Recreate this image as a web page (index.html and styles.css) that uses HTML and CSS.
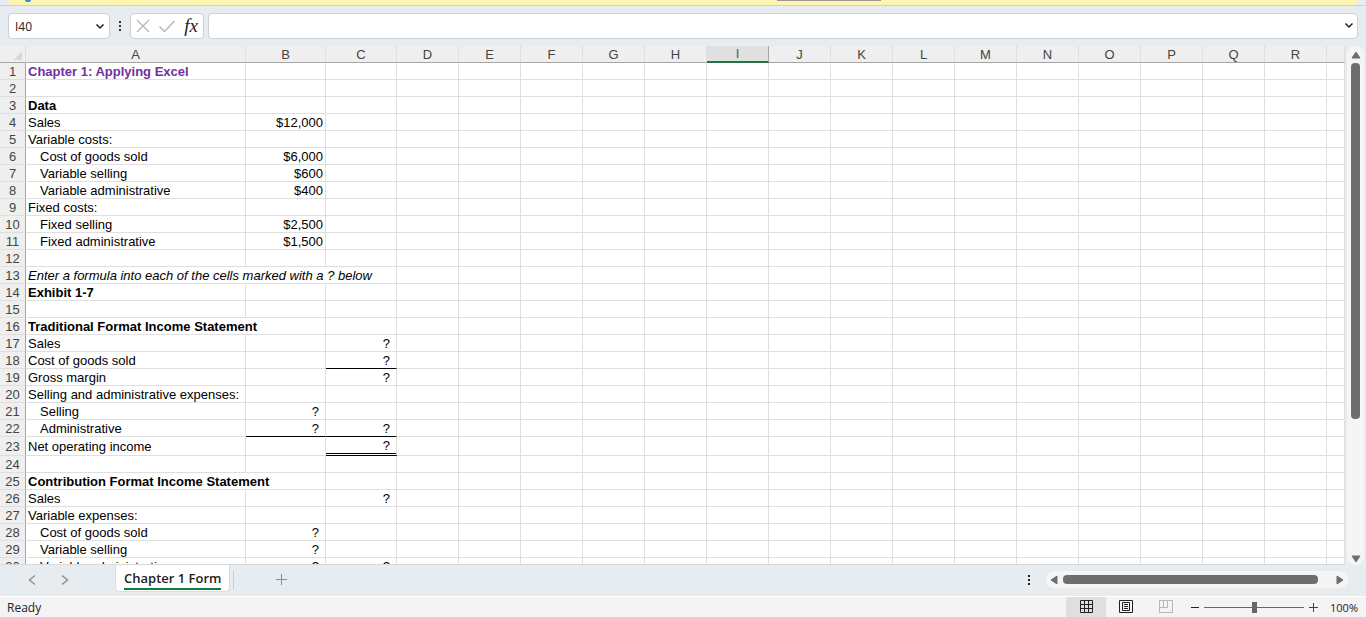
FILE: index.html
```html
<!DOCTYPE html>
<html lang="en">
<head>
    <meta charset="UTF-8">
    <meta name="viewport" content="width=device-width, initial-scale=1.0">
    <title>Chapter 1 Form</title>
    <link rel="stylesheet" href="styles.css">
</head>
<body>
    <div class="top">
        <div class="message-bar">
            <span class="message-icon"></span>
            <span class="message-button"></span>
        </div>
    </div>

    <div class="formula-bar">
        <div class="name-box">
            <input class="name-input" type="text" value="I40" aria-label="Name box">
            <button class="icon-button" type="button" aria-label="Show names">
                <svg width="10" height="8" viewBox="0 0 10 8"><path d="M1.5 2.5l3.5 3.500L8.500 2.500" fill="none" stroke="#222" stroke-width="1.500"/></svg>
            </button>
        </div>
        <svg class="grip" width="4" height="12" viewBox="0 0 4 12"><path d="M1 1h2v2H1zM1 5h2v2H1zM1 9h2v2H1z" fill="#333"/></svg>
        <div class="formula-buttons">
            <button class="icon-button" type="button" aria-label="Cancel">
                <svg width="14" height="14" viewBox="0 0 14 14"><path d="M1 1l12 12M13 1L1 13" stroke="#b4b4b4" stroke-width="1.2"/></svg>
            </button>
            <button class="icon-button" type="button" aria-label="Enter">
                <svg width="18" height="14" viewBox="0 0 18 14"><path d="M1.500 7.500l5 5L16.500 2" fill="none" stroke="#b4b4b4" stroke-width="1.3"/></svg>
            </button>
            <button class="icon-button fx" type="button" aria-label="Insert function">fx</button>
        </div>
        <div class="formula-box">
            <input class="formula-input" type="text" aria-label="Formula">
            <button class="icon-button" type="button" aria-label="Expand formula bar">
                <svg width="10" height="8" viewBox="0 0 10 8"><path d="M1.500 1.500l3.500 3.500L8.500 1.500" fill="none" stroke="#222" stroke-width="1.500"/></svg>
            </button>
        </div>
    </div>

    <div class="workspace">
        <div class="sheet">
            <table class="grid">
                <colgroup id="cols"></colgroup>
                <thead>
                    <tr id="letters"></tr>
                </thead>
                <tbody id="rows"></tbody>
            </table>
        </div>
        <div class="scroll-vertical">
            <svg width="10" height="8" viewBox="0 0 10 8"><path d="M5 1l4 6H1z" fill="#6e6e6e" stroke="#6e6e6e" stroke-linejoin="round"/></svg>
            <div class="track-vertical"><div class="thumb-vertical"></div></div>
            <svg width="10" height="8" viewBox="0 0 10 8"><path d="M5 7l4-6H1z" fill="#6e6e6e" stroke="#6e6e6e" stroke-linejoin="round"/></svg>
        </div>
    </div>

    <div class="tab-bar">
        <div class="tab-arrows">
            <button class="icon-button" type="button" aria-label="Previous sheet">
                <svg width="8" height="12" viewBox="0 0 8 12"><path d="M7 1.500L1.500 6 7 10.500" fill="none" stroke="#8c8c8c" stroke-width="1.400"/></svg>
            </button>
            <button class="icon-button" type="button" aria-label="Next sheet">
                <svg width="8" height="12" viewBox="0 0 8 12"><path d="M1 1.500L6.500 6 1 10.500" fill="none" stroke="#8c8c8c" stroke-width="1.400"/></svg>
            </button>
        </div>
        <button class="tab" type="button"><span class="tab-label">Chapter 1 Form</span></button>
        <div class="tab-divider"></div>
        <button class="icon-button add-sheet" type="button" aria-label="New sheet">
            <svg width="11" height="11" viewBox="0 0 11 11"><path d="M5.500 0v11M0 5.500h11" stroke="#8c8c8c"/></svg>
        </button>
        <svg class="tab-grip" width="3" height="10" viewBox="0 0 3 10"><path d="M0 0h2v2H0zM0 4h2v2H0zM0 8h2v2H0z" fill="#222"/></svg>
        <div class="scroll-horizontal">
            <svg width="8" height="10" viewBox="0 0 8 10"><path d="M1 5l6-4v8z" fill="#6e6e6e" stroke="#6e6e6e" stroke-linejoin="round"/></svg>
            <div class="track-horizontal"><div class="thumb-horizontal"></div></div>
            <svg width="8" height="10" viewBox="0 0 8 10"><path d="M7 5L1 1v8z" fill="#6e6e6e" stroke="#6e6e6e" stroke-linejoin="round"/></svg>
        </div>
    </div>

    <div class="status-bar">
        <span class="status-text">Ready</span>
        <button class="view-button active" type="button" aria-label="Normal">
            <svg width="13" height="13" viewBox="0 0 13 13"><path d="M.5.5h12v12H.5zM4.500.5v12M8.500.5v12M.5 4.500h12M.5 8.500h12" fill="none" stroke="#222"/></svg>
        </button>
        <button class="view-button" type="button" aria-label="Page layout">
            <svg width="14" height="13" viewBox="0 0 14 13"><path d="M.5.5h13v12H.5zM3.500 2.500h7v8h-7zM5 4.500h4M5 6.500h4M5 8.500h4" fill="none" stroke="#222"/></svg>
        </button>
        <button class="view-button" type="button" aria-label="Page break preview">
            <svg width="14" height="13" viewBox="0 0 14 13"><path d="M.5.5h13v12H.5zM.5 7.500h8v-7M4.500.5v7" fill="none" stroke="#b8b8b8"/></svg>
        </button>
        <button class="icon-button zoom-button" type="button" aria-label="Zoom out">
            <svg width="8" height="9" viewBox="0 0 8 9"><path d="M0 4.500h8" stroke="#222"/></svg>
        </button>
        <input class="zoom-slider" type="range" min="0" max="100" value="50" aria-label="Zoom">
        <button class="icon-button zoom-button" type="button" aria-label="Zoom in">
            <svg width="9" height="9" viewBox="0 0 9 9"><path d="M4.500 0v9M0 4.500h9" stroke="#444"/></svg>
        </button>
        <span class="zoom-value">100%</span>
    </div>

    <script>
        const letters = 'ABCDEFGHIJKLMNOPQR'.split('').concat('');

        // row number: [A, B, C], a cell is [text, classes, colspan]
        const data = {
            1: [['Chapter 1: Applying Excel', 'bold title']],
            3: [['Data', 'bold']],
            4: [['Sales'], ['$12,000', 'amount']],
            5: [['Variable costs:']],
            6: [['Cost of goods sold', 'indent'], ['$6,000', 'amount']],
            7: [['Variable selling', 'indent'], ['$600', 'amount']],
            8: [['Variable administrative', 'indent'], ['$400', 'amount']],
            9: [['Fixed costs:']],
            10: [['Fixed selling', 'indent'], ['$2,500', 'amount']],
            11: [['Fixed administrative', 'indent'], ['$1,500', 'amount']],
            13: [['Enter a formula into each of the cells marked with a ? below', 'italic', 3]],
            14: [['Exhibit 1-7', 'bold']],
            16: [['Traditional Format Income Statement', 'bold', 2]],
            17: [['Sales'], [''], ['?', 'mark']],
            18: [['Cost of goods sold'], [''], ['?', 'mark line']],
            19: [['Gross margin'], [''], ['?', 'mark']],
            20: [['Selling and administrative expenses:']],
            21: [['Selling', 'indent'], ['?', 'mark']],
            22: [['Administrative', 'indent'], ['?', 'mark line'], ['?', 'mark line']],
            23: [['Net operating income'], [''], ['?', 'mark double']],
            25: [['Contribution Format Income Statement', 'bold', 2]],
            26: [['Sales'], [''], ['?', 'mark']],
            27: [['Variable expenses:']],
            28: [['Cost of goods sold', 'indent'], ['?', 'mark']],
            29: [['Variable selling', 'indent'], ['?', 'mark']],
            30: [['Variable administrative', 'indent'], ['?', 'mark'], ['?', 'mark']]
        };

        let cols = '<col class="col-number">';
        let head = '<th class="corner"></th>';
        letters.forEach(letter => {
            cols += `<col class="col-${letter || 'rest'}">`;
            head += `<th class="${letter === 'I' ? 'selected' : ''}">${letter}</th>`;
        });
        document.getElementById('cols').innerHTML = cols;
        document.getElementById('letters').innerHTML = head;

        let body = '';
        for (let row = 1; row <= 30; row++) {
            const cells = data[row] || [];
            body += `<tr class="${row === 23 ? 'tall' : ''}"><th>${row}</th>`;
            let used = 0;
            cells.forEach(([text, classes = '', span = 1]) => {
                body += `<td class="${classes}" colspan="${span}">${text}</td>`;
                used += span;
            });
            body += '<td></td>'.repeat(letters.length - used) + '</tr>';
        }
        document.getElementById('rows').innerHTML = body;
    </script>
</body>
</html>
```
FILE: styles.css
```css
* {
    box-sizing: border-box;
}

body {
    margin: 0;
    height: 100vh;
    display: flex;
    flex-direction: column;
    overflow: hidden;
    background-color: #e7ecf1;
    color: #222;
    font-family: "Open Sans", "Noto Sans", sans-serif;
    font-size: 12px;
}

svg {
    display: block;
    flex: none;
}

button,
input {
    font: inherit;
    color: inherit;
    border: 0;
    padding: 0;
    background: none;
}

.icon-button {
    display: flex;
    align-items: center;
    justify-content: center;
}

/* message bar */
.top {
    height: 6px;
    flex: none;
    padding: 0 8px;
    border-bottom: 1px solid #cdd1d6;
}

.message-bar {
    height: 5px;
    display: flex;
    padding-left: 17px;
    background-color: #fdf4b0;
    border-radius: 0 0 6px 6px;
}

.message-icon {
    width: 6px;
    height: 2px;
    background-color: #2f8fce;
    border-radius: 0 0 3px 3px;
}

.message-button {
    width: 104px;
    height: 1px;
    margin-left: 56%;
    background-color: #999;
}

/* formula bar */
.formula-bar {
    height: 40px;
    flex: none;
    display: flex;
    align-items: center;
    padding: 0 8px;
}

.name-box,
.formula-buttons,
.formula-box {
    height: 26px;
    display: flex;
    align-items: center;
    background-color: #fff;
    border: 1px solid #d0d0d0;
    border-radius: 4px;
}

.name-box {
    width: 102px;
    padding: 0 5px 0 6px;
}

.name-input {
    width: 80px;
    flex: 1;
}

.grip {
    margin: 0 8px;
}

.formula-buttons {
    width: 74px;
    justify-content: space-between;
    padding: 0 5px;
}

.fx {
    font-family: "Liberation Serif", serif;
    font-style: italic;
    font-size: 19px;
    line-height: 20px;
}

.formula-box {
    flex: 1;
    margin-left: 4px;
    padding: 0 3px;
}

.formula-input {
    flex: 1;
}

/* sheet */
.workspace {
    flex: 1;
    min-height: 0;
    display: flex;
}

.sheet {
    flex: 1;
    min-width: 0;
    overflow: hidden;
    background-color: #fff;
    border-bottom: 1px solid #d9d9d9;
}

.grid {
    width: 100%;
    table-layout: fixed;
    border-collapse: separate;
    border-spacing: 0;
    font-family: "Liberation Sans", Arial, sans-serif;
    font-size: 13px;
    line-height: 14px;
    color: #000;
}

.grid col {
    width: 62px;
}

.grid .col-number {
    width: 26px;
}

.grid .col-A {
    width: 220px;
}

.grid .col-B {
    width: 80px;
}

.grid .col-C {
    width: 71px;
}

.grid .col-rest {
    width: auto;
}

.grid th,
.grid td {
    height: 17px;
    padding: 2px 0 0;
    border-right: 1px solid #dfdfdf;
    border-bottom: 1px solid #dfdfdf;
    white-space: nowrap;
}

.grid th {
    background-color: #efefef;
    color: #444;
    font-weight: normal;
}

.grid thead th {
    border-bottom-color: #a6a6a6;
}

.grid tbody th {
    border-right-color: #a6a6a6;
}

.grid .corner {
    background-image: linear-gradient(135deg, transparent 50%, #d8d8d8 50%);
    background-size: 9px 9px;
    background-position: 13px 5px;
    background-repeat: no-repeat;
}

.grid thead .selected {
    padding-top: 1px;
    background-color: #e0e0e0;
    color: #217346;
    border-right-color: #a6a6a6;
    border-bottom: 2px solid #217346;
}

.grid td {
    padding-left: 2px;
    padding-right: 2px;
}

.grid .tall td {
    height: 19px;
}

.grid .bold {
    font-weight: bold;
}

.grid .title {
    color: #7030a0;
}

.grid .italic {
    font-style: italic;
}

.grid .indent {
    padding-left: 14px;
}

.grid .amount {
    text-align: right;
}

.grid .mark {
    padding-right: 6px;
    text-align: right;
}

.grid .line {
    border-bottom-color: #000;
}

.grid .double {
    border-bottom: 3px double #000;
}

/* scroll bars */
.scroll-vertical {
    width: 17px;
    margin: 0 2px;
    display: flex;
    flex-direction: column;
    align-items: center;
    padding: 5px 0 2px;
    background-color: #f5f5f5;
    border-radius: 8px;
}

.track-vertical {
    flex: 1;
    padding: 4px 0;
}

.thumb-vertical {
    width: 9px;
    height: 73%;
    background-color: #6e6e6e;
    border-radius: 4px;
}

.scroll-horizontal {
    width: 302px;
    height: 17px;
    display: flex;
    align-items: center;
    padding: 0 4px;
    background-color: #f5f5f5;
    border-radius: 8px;
}

.track-horizontal {
    flex: 1;
    padding: 0 5px;
}

.thumb-horizontal {
    width: 95%;
    height: 9px;
    background-color: #6e6e6e;
    border-radius: 4px;
}

/* sheet tabs */
.tab-bar {
    height: 31px;
    flex: none;
    display: flex;
    align-items: center;
    padding: 0 18px 2px 0;
}

.tab-arrows {
    width: 115px;
    display: flex;
    gap: 25px;
    padding-left: 28px;
}

.tab {
    align-self: flex-start;
    height: 27px;
    padding: 0 8px;
    background-color: #fff;
    border: 1px solid #dcdcdc;
    border-top: 0;
    border-radius: 0 0 5px 5px;
}

.tab-label {
    display: block;
    height: 23px;
    line-height: 22px;
    border-bottom: 2px solid #107c41;
    font-size: 13px;
    font-weight: 600;
}

.tab-divider {
    width: 1px;
    height: 18px;
    margin-left: 3px;
    background-color: #c8ccd0;
}

.add-sheet {
    margin-left: 42px;
}

.tab-grip {
    margin: 0 15px 0 auto;
}

/* status bar */
.status-bar {
    height: 21px;
    flex: none;
    display: flex;
    align-items: center;
    padding-right: 8px;
    background-color: #f4f4f4;
    border-top: 1px solid #fff;
}

.status-text {
    flex: 1;
    padding-left: 7px;
}

.view-button {
    width: 40px;
    height: 20px;
    display: flex;
    align-items: center;
    justify-content: center;
    padding-bottom: 2px;
}

.view-button.active {
    background-color: #dfdfdf;
}

.zoom-button {
    margin: 0 5px;
}

.zoom-slider {
    width: 100px;
    height: 12px;
    margin: 0;
    appearance: none;
    background: linear-gradient(#666, #666) center / 100% 1px no-repeat;
}

.zoom-slider::-webkit-slider-thumb {
    appearance: none;
    width: 5px;
    height: 11px;
    background-color: #666;
}

.zoom-value {
    margin-left: 7px;
    font-size: 11px;
}
```
